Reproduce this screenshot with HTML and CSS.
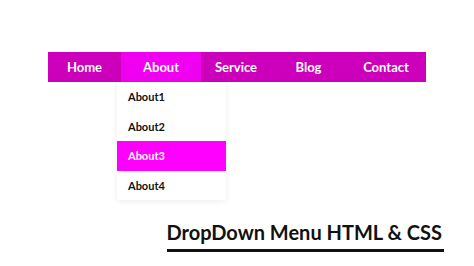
FILE: index.html
```html
<!DOCTYPE html>
<html lang="en">
<head>
    <meta charset="UTF-8">
    <meta name="viewport" content="width=device-width, initial-scale=1.0">
    <title>DropDown Menu</title>
    <link rel="stylesheet" href="styles.css">
</head>
<body>
    <nav class="menu">
        <ul class="menu-list">
            <li><a href="#">Home</a></li>
            <li class="active">
                <a href="#">About</a>
                <ul class="dropdown">
                    <li><a href="#">About1</a></li>
                    <li><a href="#">About2</a></li>
                    <li class="hover"><a href="#">About3</a></li>
                    <li><a href="#">About4</a></li>
                </ul>
            </li>
            <li><a href="#">Service</a></li>
            <li><a href="#">Blog</a></li>
            <li><a href="#">Contact</a></li>
        </ul>
    </nav>
    <div class="title-row">
        <h1 class="title">DropDown Menu HTML &amp; CSS</h1>
    </div>
</body>
</html>
```

FILE: styles.css
```css
body {
    font-family: 'Lato', 'Liberation Sans', sans-serif;
    background-color: #fff;
    margin: 0;
    padding: 52px 48px 0;
    color: #111;
}

ul {
    list-style: none;
    margin: 0;
    padding: 0;
}

a {
    text-decoration: none;
    color: inherit;
}

/* Top menu bar */
.menu-list {
    display: grid;
    grid-template-columns: 73px 80px 70px 75px 80px;
    width: 378px;
    height: 30px;
    background-color: #cc00bb;
}

.menu-list > li {
    position: relative;
    display: flex;
    align-items: center;
    justify-content: center;
    color: #fff;
    font-size: 13px;
    font-weight: bold;
}

.menu-list > li.active {
    background-color: #f000f0;
}

/* Dropdown panel */
.dropdown {
    position: absolute;
    top: 100%;
    left: -4px;
    width: 109px;
    background-color: #fff;
    box-shadow: 0 1px 6px rgba(0, 0, 0, 0.08);
}

.dropdown li {
    height: 29.5px;
    display: flex;
    align-items: center;
    padding-left: 11px;
    font-size: 11px;
    font-weight: bold;
    color: #111;
}

.dropdown li.hover {
    background-color: #ff00ff;
    color: #fff;
}

/* Heading at the bottom */
.title-row {
    display: flex;
    justify-content: flex-end;
    margin-top: 138px;
    margin-right: -18px;
}

.title {
    margin: 0;
    font-size: 20px;
    font-weight: bold;
    line-height: 24px;
    padding: 0 2px 5px 0;
    border-bottom: 3px solid #111;
}
```
